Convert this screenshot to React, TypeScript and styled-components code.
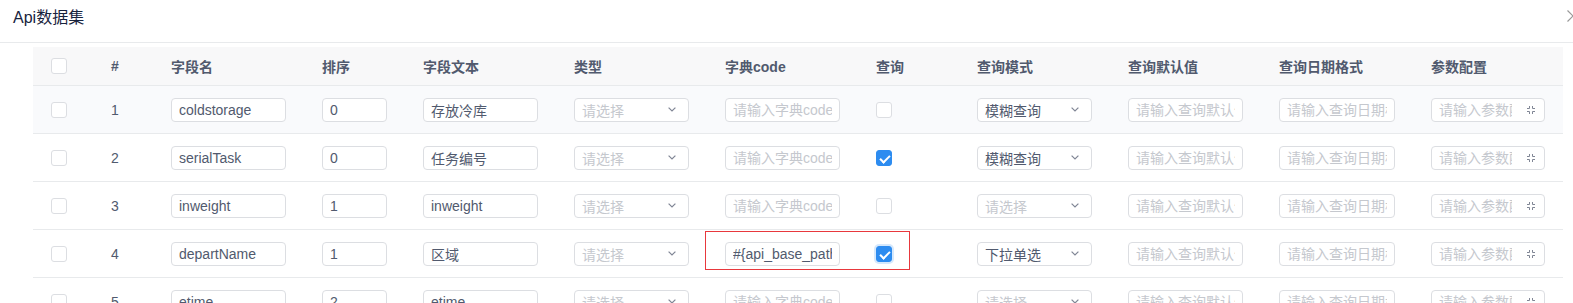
import React from "react";
import styled, { createGlobalStyle } from "styled-components";

const GlobalStyle = createGlobalStyle`
  html, body {
    margin: 0;
    padding: 0;
    background: #fff;
  }
  body {
    font-family: "Liberation Sans", "Noto Sans CJK SC", sans-serif;
    color: #515a6e;
    overflow: hidden;
  }
  * {
    box-sizing: border-box;
  }
`;

const COLUMNS = "60px 60px 151px 101px 151px 151px 151px 101px 151px 151px 152px 150px";

const Modal = styled.div`
  position: relative;
  width: 1573px;
  height: 303px;
  overflow: hidden;
  background: #fff;
`;

const ModalHeader = styled.div`
  height: 43px;
  padding: 7px 13px 0;
  border-bottom: 1px solid #e8eaec;
  font-size: 16px;
  line-height: 22px;
  color: #17233d;
`;

const CloseButton = styled.div`
  position: absolute;
  top: 10px;
  left: 1567px;
  width: 12px;
  height: 12px;
  color: #999;
  display: flex;
`;

const Table = styled.div`
  width: 1530px;
  margin: 4px 0 0 33px;
`;

const HeaderRow = styled.div`
  display: grid;
  grid-template-columns: ${COLUMNS};
  height: 39px;
  background: #f8f8f9;
  border-bottom: 1px solid #e8eaec;
  font-weight: bold;
  color: #515a6e;
`;

const Row = styled.div<{ $highlight?: boolean }>`
  position: relative;
  display: grid;
  grid-template-columns: ${COLUMNS};
  height: 48px;
  background: ${({ $highlight }) => ($highlight ? "#f9fafc" : "#fff")};
  border-bottom: 1px solid #e8eaec;
`;

const Cell = styled.div`
  display: flex;
  align-items: center;
  padding: 0 18px;
  font-size: 14px;
  min-width: 0;
  overflow: hidden;
  white-space: nowrap;
`;

const Checkbox = styled.span<{ $checked?: boolean; $focus?: boolean }>`
  position: relative;
  display: inline-block;
  width: 16px;
  height: 16px;
  border-radius: 3px;
  border: 1px solid ${({ $checked }) => ($checked ? "#2d8cf0" : "#dcdee2")};
  background: ${({ $checked }) => ($checked ? "#2d8cf0" : "#fff")};
  box-shadow: ${({ $focus }) => ($focus ? "0 0 0 2px rgba(45, 140, 240, 0.2)" : "none")};

  &::after {
    content: "";
    display: ${({ $checked }) => ($checked ? "block" : "none")};
    position: absolute;
    top: 2px;
    left: 5px;
    width: 4px;
    height: 8px;
    border: 2px solid #fff;
    border-top: 0;
    border-left: 0;
    transform: rotate(45deg);
  }
`;

const TextInput = styled.input`
  width: 100%;
  height: 24px;
  padding: 0 7px;
  border: 1px solid #dcdee2;
  border-radius: 4px;
  font-family: inherit;
  font-size: 14px;
  color: #515a6e;
  background: #fff;
  outline: none;

  &::placeholder {
    color: #c5c8ce;
  }
`;

const SelectBox = styled.div`
  width: 100%;
  height: 24px;
  display: flex;
  align-items: center;
  justify-content: space-between;
  padding: 0 12px 0 7px;
  border: 1px solid #dcdee2;
  border-radius: 4px;
  background: #fff;
`;

const SelectText = styled.span<{ $placeholder?: boolean }>`
  color: ${({ $placeholder }) => ($placeholder ? "#c5c8ce" : "#515a6e")};
`;

const SuffixInput = styled.div`
  width: 100%;
  height: 24px;
  display: flex;
  align-items: center;
  border: 1px solid #dcdee2;
  border-radius: 4px;
  background: #fff;
  overflow: hidden;

  input {
    flex: 1;
    min-width: 0;
    height: 100%;
    padding: 0 0 0 7px;
    border: 0;
    outline: none;
    font-family: inherit;
    font-size: 14px;
    color: #515a6e;
    background: transparent;
  }
  input::placeholder {
    color: #c5c8ce;
  }
`;

const SuffixIcon = styled.span`
  width: 32px;
  flex: none;
  display: flex;
  justify-content: flex-end;
  padding-right: 9px;
`;

const Annotation = styled.div`
  position: absolute;
  left: 672px;
  top: 1px;
  width: 205px;
  height: 39px;
  border: 1px solid #e8383d;
  pointer-events: none;
`;

const Chevron = () => (
  <svg width="8" height="5" viewBox="0 0 8 5" fill="none">
    <polyline points="0.6,0.6 4,4 7.4,0.6" stroke="#808695" strokeWidth="1.2" />
  </svg>
);

const ShrinkIcon = () => (
  <svg width="8" height="8" viewBox="0 0 8 8" fill="none" stroke="#808695" strokeWidth="1">
    <path d="M0 2.5H2.5V0" />
    <path d="M8 2.5H5.5V0" />
    <path d="M0 5.5H2.5V8" />
    <path d="M8 5.5H5.5V8" />
  </svg>
);

const Select = ({ value }: { value?: string }) => (
  <SelectBox>
    <SelectText $placeholder={!value}>{value || "请选择"}</SelectText>
    <Chevron />
  </SelectBox>
);

type Field = {
  name: string;
  order: string;
  text: string;
  dictCode?: string;
  query?: boolean;
  queryMode?: string;
  highlight?: boolean;
  marked?: boolean;
};

const FIELDS: Field[] = [
  { name: "coldstorage", order: "0", text: "存放冷库", queryMode: "模糊查询", highlight: true },
  { name: "serialTask", order: "0", text: "任务编号", query: true, queryMode: "模糊查询" },
  { name: "inweight", order: "1", text: "inweight" },
  { name: "departName", order: "1", text: "区域", dictCode: "#{api_base_path}/sys/dict", query: true, queryMode: "下拉单选", marked: true },
  { name: "etime", order: "2", text: "etime" },
];

const HEADERS = ["#", "字段名", "排序", "字段文本", "类型", "字典code", "查询", "查询模式", "查询默认值", "查询日期格式", "参数配置"];

export default function App() {
  return (
    <Modal>
      <GlobalStyle />
      <ModalHeader>Api数据集</ModalHeader>
      <CloseButton>
        <svg width="12" height="12" viewBox="0 0 12 12" fill="none" stroke="currentColor" strokeWidth="1.2">
          <path d="M0.5 0.5L11.5 11.5M11.5 0.5L0.5 11.5" />
        </svg>
      </CloseButton>

      <Table>
        <HeaderRow>
          <Cell>
            <Checkbox />
          </Cell>
          {HEADERS.map((h) => (
            <Cell key={h}>{h}</Cell>
          ))}
        </HeaderRow>

        {FIELDS.map((f, i) => (
          <Row key={f.name} $highlight={f.highlight}>
            <Cell>
              <Checkbox />
            </Cell>
            <Cell>{i + 1}</Cell>
            <Cell>
              <TextInput readOnly value={f.name} />
            </Cell>
            <Cell>
              <TextInput readOnly value={f.order} />
            </Cell>
            <Cell>
              <TextInput readOnly value={f.text} />
            </Cell>
            <Cell>
              <Select />
            </Cell>
            <Cell>
              <TextInput readOnly value={f.dictCode ?? ""} placeholder="请输入字典code" />
            </Cell>
            <Cell>
              <Checkbox $checked={f.query} $focus={f.marked} />
            </Cell>
            <Cell>
              <Select value={f.queryMode} />
            </Cell>
            <Cell>
              <TextInput readOnly value="" placeholder="请输入查询默认值" />
            </Cell>
            <Cell>
              <TextInput readOnly value="" placeholder="请输入查询日期格式" />
            </Cell>
            <Cell>
              <SuffixInput>
                <input readOnly value="" placeholder="请输入参数配置" />
                <SuffixIcon>
                  <ShrinkIcon />
                </SuffixIcon>
              </SuffixInput>
            </Cell>
            {f.marked && <Annotation />}
          </Row>
        ))}
      </Table>
    </Modal>
  );
}
